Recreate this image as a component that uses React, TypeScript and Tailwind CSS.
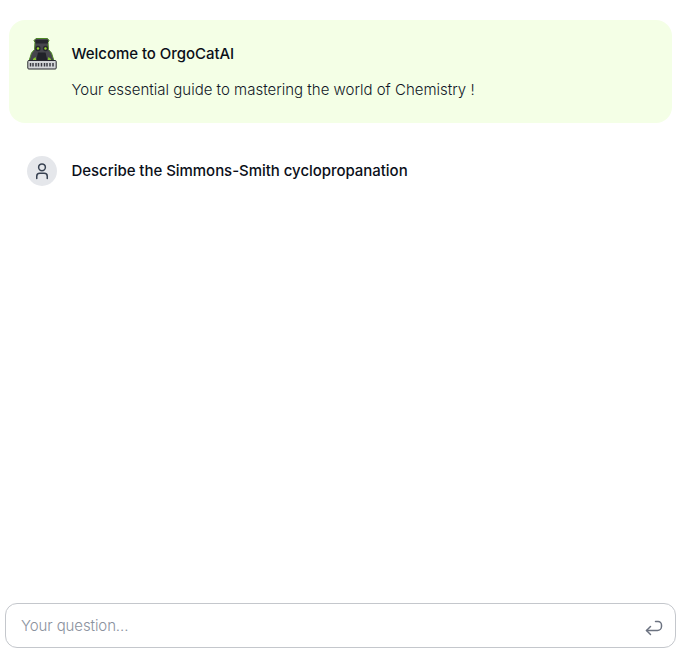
export default function App() {
  return (
    <div className="h-[656px] w-[680px] flex flex-col bg-white text-[15px] text-[#111827]" style={{ fontFamily: 'Inter, sans-serif' }}>
      <div className="flex-1 pt-5 pl-[9px] pr-2">
        <div className="h-[103px] rounded-2xl bg-[#f4ffe6] pl-[18px] pr-4 pt-[17px] flex gap-[15px]">
          <svg width="30" height="33" viewBox="0 0 30 33" className="shrink-0 w-[30px] h-[33px]">
            <path d="M9 1.500h11.500l1.500 2-1 2 .5 7 3 3.500 2.500 8H2l2.500-8 3-3.500 .5-7-1-2z" fill="#46464d" stroke="#4f8a26" strokeWidth="1" />
            <path d="M8.500 3h12.500v3.500h-12.500z" fill="#26272e" />
            <ellipse cx="11" cy="11.500" rx="2.600" ry="2.800" fill="#26272e" />
            <ellipse cx="18.500" cy="11.500" rx="2.600" ry="2.800" fill="#26272e" />
            <circle cx="11" cy="11.500" r="1.200" fill="#9ad62f" />
            <circle cx="18.500" cy="11.500" r="1.200" fill="#9ad62f" />
            <path d="M11 15.500h7.500l2 8.500h-11.500z" fill="#212229" />
            <path d="M6 22l2.500-2 1 4H6zM24 22l-2.500-2-1 4H24z" fill="#86c42f" />
            <rect x="0.800" y="23.500" width="28.400" height="8.500" rx="1" fill="#d4d6d8" stroke="#26272d" strokeWidth="1" />
            <path d="M3.500 26v3.500M6 26v3.500M9 26v3.500M11.500 26v3.500M14.500 26v3.500M17.500 26v3.500M20 26v3.500M23 26v3.500M26 26v3.500" stroke="#3a3b42" strokeWidth="1.500" />
          </svg>
          <div className="min-w-0 -ml-[0.5px]">
            <div className="h-[32px] flex items-center font-medium text-[#0b0f19] text-[15px] leading-none tracking-[-0.04px]">Welcome to OrgoCatAI</div>
            <p className="mt-3 font-light text-[15px] leading-[18px] text-[#111827]">Your essential guide to mastering the world of Chemistry !</p>
          </div>
        </div>
        <div className="mt-[33px] ml-[18px] flex items-center gap-[14.5px]">
          <div className="h-[30px] w-[30px] rounded-full bg-[#e5e7eb] flex items-center justify-center">
            <svg width="18" height="18" viewBox="0 0 24 24" fill="none" stroke="#374151" strokeWidth="2" strokeLinecap="round" strokeLinejoin="round">
              <path d="M19 22v-3a4 4 0 0 0-4-4H9a4 4 0 0 0-4 4v3" />
              <circle cx="12" cy="7" r="4.500" />
            </svg>
          </div>
          <div className="font-medium text-[15px] text-[#0b0f19] tracking-[-0.04px]">Describe the Simmons-Smith cyclopropanation</div>
        </div>
      </div>
      <div className="pl-[5px] pr-1 pb-2">
        <div className="h-[45px] rounded-xl border border-[#c4c7cc] flex items-center justify-between pl-[15px] pr-[11px]">
          <span className="text-[15px] font-light text-[#8b929e] translate-y-[1px] tracking-[-0.1px]">Your question...</span>
          <svg width="20" height="20" viewBox="0 0 20 20" fill="none" stroke="#6b7280" strokeWidth="1.500" strokeLinecap="round" strokeLinejoin="round" className="mt-0.5">
            <path d="M6.500 9.500L2.500 13.500l4 4" />
            <path d="M2.500 13.500h11a4 4 0 0 0 4-4V8a3.500 3.500 0 0 0-3.500-3.500h-2.500" />
          </svg>
        </div>
      </div>
    </div>
  );
}
